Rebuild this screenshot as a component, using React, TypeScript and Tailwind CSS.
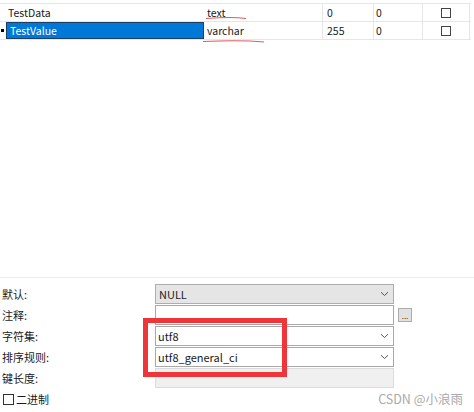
import React from "react";

const font = { fontFamily: '"Noto Sans CJK SC", "Noto Sans", sans-serif' };

function Chevron() {
  return (
    <svg width="9" height="6" viewBox="0 0 9 6" className="shrink-0">
      <path d="M1 1.2 L4.5 4.5 L8 1.2" fill="none" stroke="#555" strokeWidth="1" />
    </svg>
  );
}

function Box() {
  return <div className="w-[11px] h-[11px] border border-[#333] bg-white" />;
}

function GridRow({
  name,
  type,
  len,
  dec,
  selected,
}: {
  name: string;
  type: string;
  len: string;
  dec: string;
  selected?: boolean;
}) {
  return (
    <div className="flex h-[18px] border-b border-[#e6e6e6] text-[10.5px] text-[#1a1a1a]">
      <div className="w-[6px] flex items-center">
        {selected && <div className="w-[3px] h-[3px] bg-black ml-[1px]" />}
      </div>
      <div
        className={
          selected
            ? "w-[198px] bg-[#0078d7] text-white flex items-center pl-[3px] border border-[#1c3f66]"
            : "w-[198px] flex items-center pl-[2px]"
        }
      >
        {name}
      </div>
      <div className="w-[118px] flex items-center pl-[3px]">{type}</div>
      <div className="w-[51px] flex items-center pl-[4px] border-l border-[#e6e6e6]">{len}</div>
      <div className="w-[49px] flex items-center pl-[2px] border-l border-[#e6e6e6]">{dec}</div>
      <div className="w-[48px] flex items-center justify-center border-l border-r border-[#e6e6e6]">
        <div className="w-[10px] h-[10px] border border-[#444] bg-white" />
      </div>
    </div>
  );
}

function FormRow({ label, children, extra }: { label: string; children: React.ReactNode; extra?: React.ReactNode }) {
  return (
    <div className="flex h-[20px] items-center">
      <div className="w-[155px] pl-[2px] text-[11px] text-[#1a1a1a]">{label}</div>
      {children}
      {extra}
    </div>
  );
}

export default function App() {
  return (
    <div className="relative w-[474px] h-[412px] bg-white overflow-hidden" style={font}>
      <div className="pt-[3px] flex flex-col">
        <div className="border-t border-[#e6e6e6] w-[471px]">
          <GridRow name="TestData" type="text" len="0" dec="0" />
          <GridRow name="TestValue" type="varchar" len="255" dec="0" selected />
        </div>
      </div>

      <svg className="absolute left-0 top-0 pointer-events-none" width="474" height="50">
        <path d="M206 18.5 C 220 17.5, 235 17, 246 18.5" fill="none" stroke="#e05a64" strokeWidth="1.1" />
        <path d="M203 41.5 C 225 40.5, 248 40.5, 264 42" fill="none" stroke="#e05a64" strokeWidth="1.1" />
      </svg>

      <div className="mt-[237px] border-t border-[#ececec]" />

      <div className="mt-[6px] flex flex-col gap-[1px]">
        <FormRow label="默认:">
          <div className="w-[239px] h-[20px] bg-[#e5e5e5] border border-[#adadad] flex items-center justify-between pl-[3px] pr-[4px] text-[11px] text-[#1a1a1a]">
            <span>NULL</span>
            <Chevron />
          </div>
        </FormRow>
        <FormRow
          label="注释:"
          extra={
            <div className="ml-[4px] w-[14px] h-[14px] bg-[#e1e1e1] border border-[#adadad] flex items-end justify-center text-[8px] leading-[10px] text-[#333]">
              ...
            </div>
          }
        >
          <div className="w-[239px] h-[20px] bg-white border border-[#a8a8a8]" />
        </FormRow>
        <FormRow label="字符集:">
          <div className="w-[239px] h-[20px] bg-white border border-[#a8a8a8] flex items-center justify-between pl-[2px] pr-[4px] text-[11px] text-[#1a1a1a]">
            <span>utf8</span>
            <Chevron />
          </div>
        </FormRow>
        <FormRow label="排序规则:">
          <div className="w-[239px] h-[20px] bg-white border border-[#a8a8a8] flex items-center justify-between pl-[2px] pr-[4px] text-[11px] text-[#1a1a1a]">
            <span>utf8_general_ci</span>
            <Chevron />
          </div>
        </FormRow>
        <FormRow label="键长度:">
          <div className="w-[239px] h-[20px] bg-[#f0f0f0] border border-[#dcdcdc]" />
        </FormRow>
      </div>

      <div className="mt-[3px] flex items-center justify-between pl-[3px] pr-[11px] h-[16px]">
        <div className="flex items-center gap-[2px] text-[11px] text-[#1a1a1a]">
          <Box />
          <span>二进制</span>
        </div>
        <span className="text-[12.5px] text-[#a9a9a9]">CSDN @小浪雨</span>
      </div>

      <div className="absolute left-[143px] top-[318px] w-[144px] h-[59px] border-[5px] border-[#f0353a] pointer-events-none" />
    </div>
  );
}
